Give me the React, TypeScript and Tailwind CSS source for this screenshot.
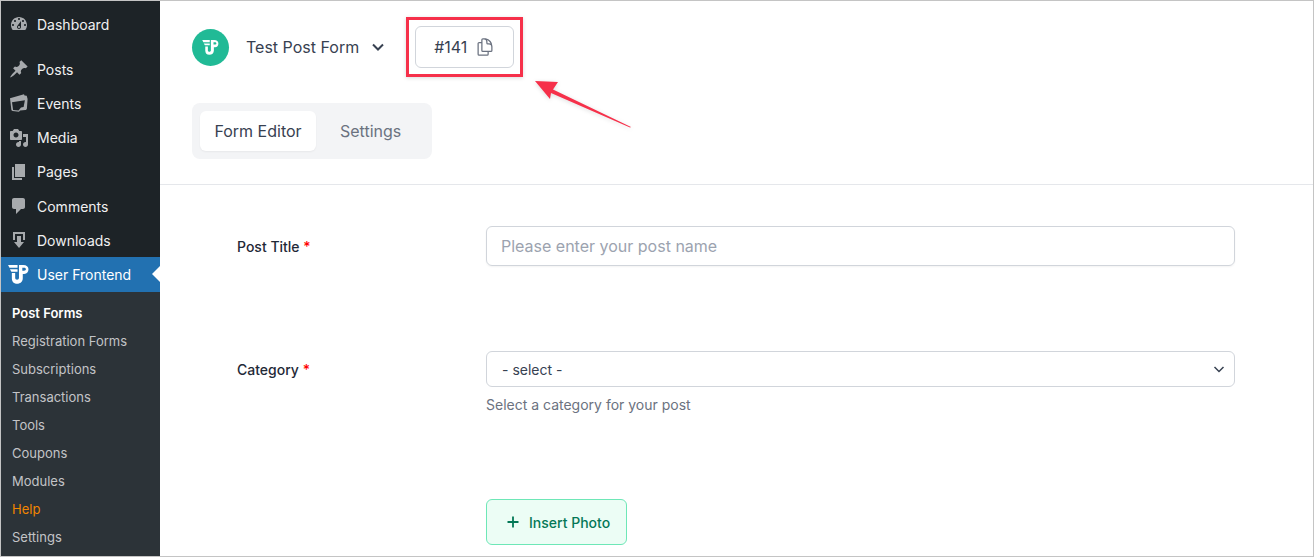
import React from 'react';
import { HiOutlineDocumentDuplicate } from 'react-icons/hi2';

const icons: Record<string, React.ReactNode> = {
  dashboard: (
    <path
      fillRule="evenodd"
      d="M3.76 16h12.48c1.1-1.37 1.76-3.11 1.76-5 0-4.42-3.58-8-8-8s-8 3.58-8 8c0 1.89.66 3.63 1.76 5zM10 4c.55 0 1 .45 1 1s-.45 1-1 1-1-.45-1-1 .45-1 1-1zM6 6c.55 0 1 .45 1 1s-.45 1-1 1-1-.45-1-1 .45-1 1-1zm8 0c.55 0 1 .45 1 1s-.45 1-1 1-1-.45-1-1 .45-1 1-1zm-5.37 5.55L12 7v6c0 1.1-.9 2-2 2s-2-.9-2-2c0-.57.24-1.08.63-1.45zM4 10c.55 0 1 .45 1 1s-.45 1-1 1-1-.45-1-1 .45-1 1-1zm12 0c.55 0 1 .45 1 1s-.45 1-1 1-1-.45-1-1 .45-1 1-1zm-5 3c0-.55-.45-1-1-1s-1 .45-1 1 .45 1 1 1 1-.45 1-1z"
    />
  ),
  posts: (
    <path d="M10.44 3.02l1.82-1.82 6.36 6.35-1.83 1.82c-1.05-.68-2.48-.57-3.41.36l-.75.75c-.92.93-1.04 2.35-.35 3.41l-1.83 1.82-2.41-2.41-2.8 2.79c-.42.42-3.38 2.71-3.8 2.29s1.86-3.39 2.28-3.81l2.79-2.79L4.1 9.36l1.83-1.82c1.05.69 2.48.57 3.4-.36l.75-.75c.93-.92 1.05-2.35.36-3.41z" />
  ),
  events: (
    <path
      fillRule="evenodd"
      d="M1 5.2 15 1.200l.5 1.300 2.200.2.900 3.300-.7 9.500c-.1.900-.7 1.500-1.600 1.600l-5.300.3-1 1.400-6.300-.8c-.8-.1-1.300-.6-1.400-1.400L1 5.200zM3 9.200l1.100 7.800 5.400.6 2.500-3 2.600-.7 1.300-6.600L3 9.200z"
    />
  ),
  media: (
    <path
      fillRule="evenodd"
      d="M13 11V4c0-.55-.45-1-1-1h-1.670L9 1H5L3.670 3H2c-.55 0-1 .45-1 1v7c0 .55.45 1 1 1h10c.55 0 1-.45 1-1zM7 4.500c1.380 0 2.500 1.120 2.500 2.500S8.380 9.500 7 9.500 4.500 8.380 4.500 7 5.620 4.500 7 4.500zM14 6h5v10.500c0 1.380-1.120 2.500-2.500 2.500S14 17.880 14 16.500s1.120-2.500 2.500-2.500c.17 0 .34.02.5.05V9h-3V6zm-4 8.050V13h2v3.500c0 1.380-1.120 2.500-2.500 2.500S7 17.880 7 16.500 8.120 14 9.500 14c.17 0 .34.02.5.05z"
    />
  ),
  pages: <path d="M6 15V2h10v13H6zm-1 1h8v2H3V5h2v11z" />,
  comments: (
    <path d="M5 2h9c1.100 0 2 .9 2 2v7c0 1.100-.9 2-2 2h-2l-5 5v-5H5c-1.100 0-2-.9-2-2V4c0-1.100.9-2 2-2z" />
  ),
  downloads: <path d="M14.010 4v6h2V2H4v8h2.010V4h8zm-2 2v6h3l-5 6-5-6h3V6h4z" />,
};

const topItems = [
  { key: 'posts', label: 'Posts' },
  { key: 'events', label: 'Events' },
  { key: 'media', label: 'Media' },
  { key: 'pages', label: 'Pages' },
  { key: 'comments', label: 'Comments' },
  { key: 'downloads', label: 'Downloads' },
];

const subItems = ['Registration Forms', 'Subscriptions', 'Transactions', 'Tools', 'Coupons', 'Modules'];

const MenuItem = ({ icon, label }: { icon: string; label: string }) => (
  <div className="flex h-[34.200px] items-center pl-[8px] text-[14px] text-[#f0f0f1]">
    <svg viewBox="0 0 20 20" className="h-[20px] w-[20px] fill-[#a7aaad]">
      {icons[icon]}
    </svg>
    <span className="ml-[8px]">{label}</span>
  </div>
);

const UfLogo = ({ className }: { className: string }) => (
  <svg viewBox="0 0 22 20" className={className}>
    <path d="M0 0h10v3H1.500zM2 4.500h8V7H3.500zM4 8.500h3.500v5c0 1.300.8 2 2 2s2-.7 2-2V0h4.500c3.500 0 5.500 1.800 5.500 4.500S20 9.500 17 9.500h-1.500v4.500c0 3.500-2.500 5.800-6 5.800S4 17.500 4 14z" />
    <path d="M15 3h1.800c1.200 0 2 .6 2 1.500s-.8 1.500-2 1.500H15z" className="fill-[#2271b1]" />
  </svg>
);

const Sidebar = () => (
  <aside className="flex w-[159px] shrink-0 flex-col bg-[#1d2327]">
    <div className="pb-[11px] pt-[6px]">
      <MenuItem icon="dashboard" label="Dashboard" />
    </div>
    {topItems.map((item) => (
      <MenuItem key={item.key} icon={item.key} label={item.label} />
    ))}
    <div className="relative flex h-[35px] items-center bg-[#2271b1] pl-[7px] text-[14px] text-white">
      <UfLogo className="h-[19px] w-[21px] fill-white" />
      <span className="ml-[8px]">User Frontend</span>
      <span className="absolute right-0 top-[9px] h-0 w-0 border-y-[8px] border-r-[8px] border-y-transparent border-r-white" />
    </div>
    <div className="flex flex-1 flex-col bg-[#2c3338] pt-[7px] text-[13px] text-[#c3c4c7]">
      <div className="flex h-[28.100px] items-center pl-[11px] font-semibold text-white">Post Forms</div>
      {subItems.map((label) => (
        <div key={label} className="flex h-[28.100px] items-center pl-[11px]">
          {label}
        </div>
      ))}
      <div className="flex h-[28.100px] items-center pl-[11px] text-[#f18500]">Help</div>
      <div className="flex h-[28.100px] items-center pl-[11px]">Settings</div>
    </div>
  </aside>
);

const Header = () => (
  <header className="h-[184px] shrink-0 border-b border-[#e5e7eb] px-[32px] pt-[25px]">
    <div className="flex items-center">
      <div className="flex h-[37px] w-[37px] items-center justify-center rounded-full bg-[#21ba96]">
        <svg viewBox="0 0 22 20" className="h-[15px] w-[17px] fill-white">
          <path d="M0 0h10v3H1.500zM2 4.500h8V7H3.500zM4 8.500h3.500v5c0 1.300.8 2 2 2s2-.7 2-2V0h4.500c3.500 0 5.500 1.800 5.500 4.500S20 9.500 17 9.500h-1.500v4.500c0 3.500-2.500 5.800-6 5.800S4 17.500 4 14z" />
          <path d="M15 3h1.800c1.200 0 2 .6 2 1.500s-.8 1.500-2 1.500H15z" className="fill-[#21ba96]" />
        </svg>
      </div>
      <span className="ml-[17px] text-[16px] text-[#374151]">Test Post Form</span>
      <svg viewBox="0 0 20 20" className="ml-[9px] h-[20px] w-[20px] fill-none stroke-[#374151] stroke-[2]">
        <path d="M5 7.500l5 5 5-5" />
      </svg>
      <div className="relative ml-[27px] flex h-[42px] w-[99px] items-center rounded-[6px] border border-[#d1d5db] pl-[18px] text-[16px] text-[#374151]">
        #141
        <HiOutlineDocumentDuplicate className="ml-[8px] h-[20px] w-[20px] text-[#6b7280]" />
        <div className="absolute -inset-x-[10px] -inset-y-[10px] border-[3px] border-[#f6304a] shadow-[0_1px_4px_rgba(0,0,0,0.15)]" />
      </div>
    </div>
    <div className="mt-[35px] flex h-[56px] w-[240px] items-center rounded-[8px] bg-[#f3f4f6] p-[8px] text-[16px]">
      <div className="flex h-[40px] w-[116px] items-center justify-center rounded-[6px] bg-white text-[#374151] shadow-[0_1px_2px_rgba(0,0,0,0.05)]">
        Form Editor
      </div>
      <div className="ml-[24px] text-[#6b7280]">Settings</div>
    </div>
  </header>
);

const FieldLabel = ({ text }: { text: string }) => (
  <label className="w-[249px] shrink-0 text-[14px] font-medium text-[#1f2937]">
    {text} <span className="text-[#ff0000]">*</span>
  </label>
);

const Form = () => (
  <section className="flex-1 pl-[77px] pr-[78px]">
    <div className="mt-[41px] flex items-center">
      <FieldLabel text="Post Title" />
      <input
        readOnly
        placeholder="Please enter your post name"
        className="h-[40px] flex-1 rounded-[6px] border border-[#d1d5db] px-[14px] text-[16px] shadow-[0_1px_2px_rgba(0,0,0,0.05)] placeholder:text-[#9ca3af]"
      />
    </div>
    <div className="mt-[85px] flex items-center">
      <FieldLabel text="Category" />
      <div className="relative flex h-[36px] flex-1 items-center rounded-[6px] border border-[#d1d5db] pl-[15px] text-[14px] text-[#374151]">
        - select -
        <svg viewBox="0 0 20 20" className="absolute right-[5px] top-[7px] h-[20px] w-[20px] fill-none stroke-[#374151] stroke-[1.500]">
          <path d="M5.500 8l4.500 4.500L14.500 8" />
        </svg>
      </div>
    </div>
    <p className="ml-[249px] mt-[8px] text-[14px] leading-[20px] text-[#6b7280]">Select a category for your post</p>
    <button className="ml-[249px] mt-[84px] flex h-[46px] w-[141px] items-center rounded-[6px] border border-[#6ee7b7] bg-[#ecfdf5] pl-[18px] text-[14px] font-medium text-[#047857]">
      <svg viewBox="0 0 16 16" className="h-[16px] w-[16px] fill-none stroke-[#047857] stroke-[1.800]">
        <path d="M8 2.500v11M2.500 8h11" />
      </svg>
      <span className="ml-[8px]">Insert Photo</span>
    </button>
  </section>
);

export default function App() {
  return (
    <div
      className="relative flex h-[557px] w-[1314px] overflow-hidden border border-[#c4c4c4] bg-white"
      style={{ fontFamily: 'Inter, sans-serif' }}
    >
      <Sidebar />
      <main className="flex min-w-0 flex-1 flex-col">
        <Header />
        <Form />
      </main>
      <svg viewBox="0 0 110 60" className="pointer-events-none absolute left-[529px] top-[74px] h-[60px] w-[110px] drop-shadow-sm">
        <polygon points="5,6 28,7 23,14.500 101,52 100,52.500 21,18 20,24" fill="#f6304a" />
      </svg>
    </div>
  );
}
